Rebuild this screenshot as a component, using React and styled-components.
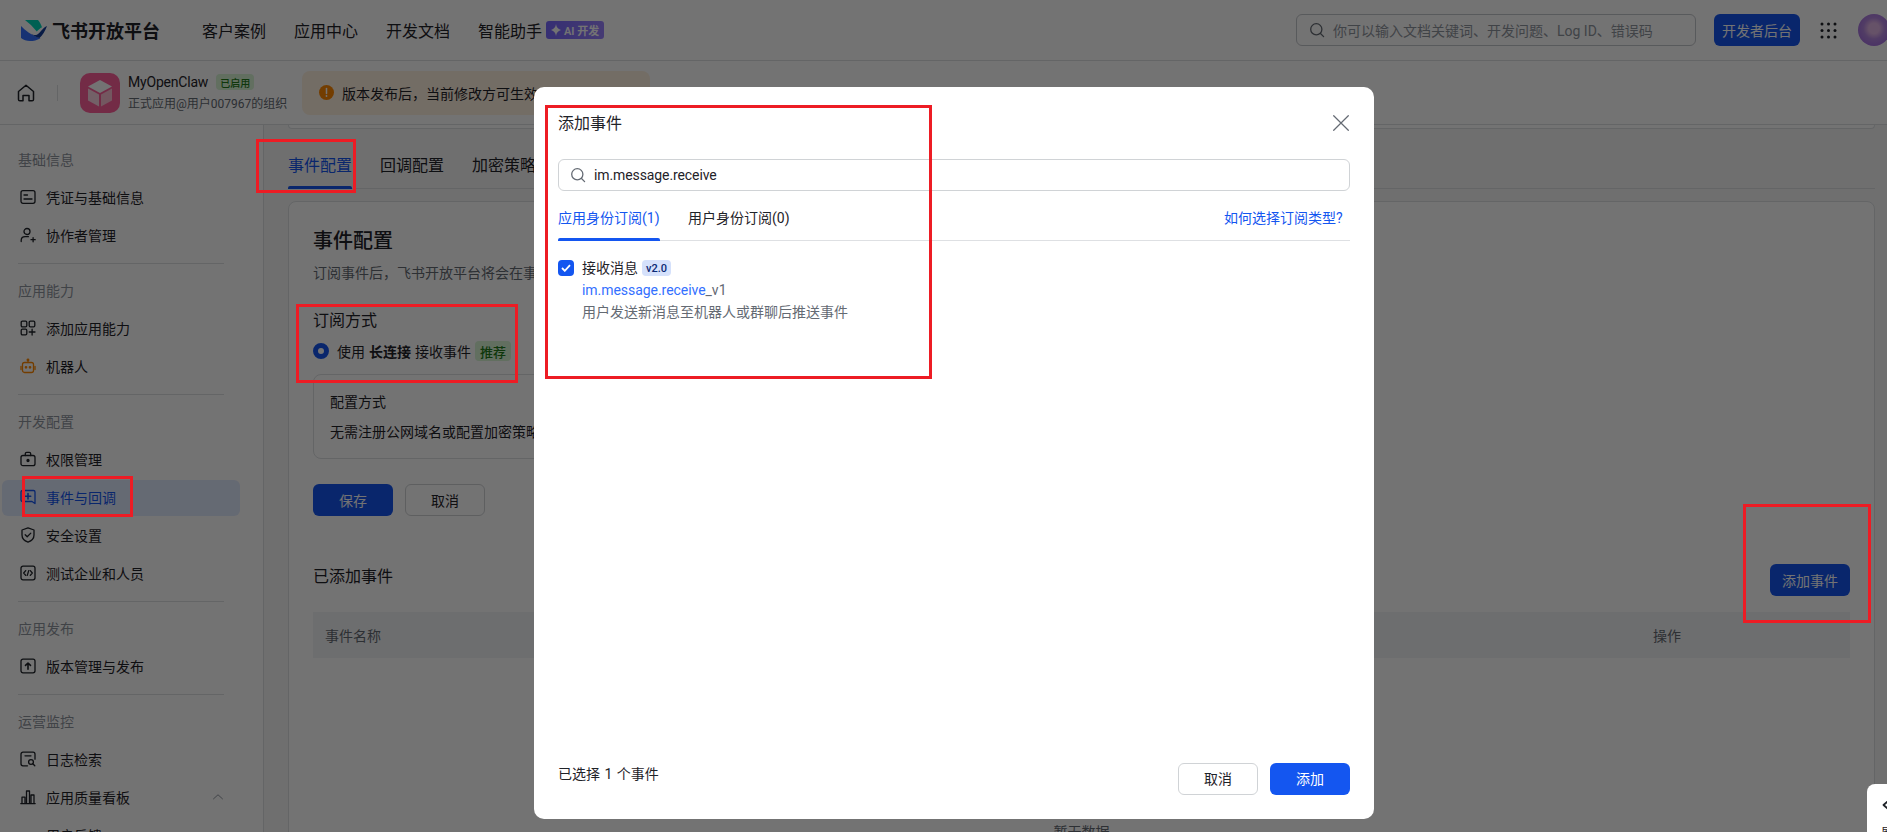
import styled, { createGlobalStyle } from 'styled-components';

const GlobalStyle = createGlobalStyle`
    html, body {
        margin: 0;
        padding: 0;
        width: 100%;
        height: 100%;
        overflow: hidden;
        background: #fff;
    }
    * {
        box-sizing: border-box;
    }
    body {
        font-family: Roboto, "Noto Sans CJK SC", sans-serif;
        font-size: 14px;
        color: #1f2329;
    }
`;

const colors = {
    primary: '#1456f0',
    text: '#1f2329',
    secondary: '#646a73',
    muted: '#8f959e',
    line: '#dee0e3',
};

const Page = styled.div`
    position: relative;
    width: 1887px;
    height: 832px;
    overflow: hidden;
    display: flex;
    flex-direction: column;
`;

const Header = styled.header`
    height: 61px;
    flex-shrink: 0;
    display: flex;
    align-items: center;
    padding-left: 21px;
    border-bottom: 1px solid ${colors.line};
`;

const Brand = styled.div`
    display: flex;
    align-items: center;
    gap: 5px;
    font-size: 18px;
    font-weight: 600;
    white-space: nowrap;
`;

const Nav = styled.nav`
    display: flex;
    align-items: center;
    gap: 28px;
    margin-left: 42px;
    font-size: 16px;
`;

const NavItem = styled.span`
    display: flex;
    align-items: center;
    gap: 4px;
    white-space: nowrap;
`;

const AiBadge = styled.span`
    display: flex;
    align-items: center;
    justify-content: center;
    gap: 3px;
    width: 58px;
    height: 18px;
    border-radius: 3px;
    background: linear-gradient(90deg, #7868ff, #9a82ff);
    color: #fff;
    font-size: 11px;
    font-weight: 600;
`;

const SearchBox = styled.div`
    margin-left: auto;
    width: 400px;
    height: 32px;
    display: flex;
    align-items: center;
    gap: 8px;
    padding-left: 12px;
    border: 1px solid #c4c7cc;
    border-radius: 6px;
    color: ${colors.muted};
    white-space: nowrap;
    & svg {
        color: ${colors.secondary};
    }
`;

const PrimaryButton = styled.button`
    width: ${(props) => props.$width || 80}px;
    height: 32px;
    padding: 0;
    border: none;
    border-radius: 6px;
    background: ${colors.primary};
    color: #fff;
    font: inherit;
    white-space: nowrap;
    flex-shrink: 0;
`;

const GhostButton = styled.button`
    width: 80px;
    height: 32px;
    padding: 0;
    border: 1px solid #d0d3d6;
    border-radius: 6px;
    background: #fff;
    color: ${colors.text};
    font: inherit;
`;

const DevButton = styled(PrimaryButton)`
    margin-left: 18px;
`;

const AppsIcon = styled.span`
    display: flex;
    margin-left: 20px;
`;

const Avatar = styled.span`
    width: 32px;
    height: 32px;
    margin-left: 21px;
    margin-right: -3px;
    flex-shrink: 0;
    border-radius: 50%;
    background: radial-gradient(circle at 50% 45%, #e3b6e6 0 22%, #b486e0 45%, #9a5ee0 100%);
`;

const SubHeader = styled.div`
    height: 64px;
    flex-shrink: 0;
    display: flex;
    align-items: center;
    padding-left: 17px;
    border-bottom: 1px solid ${colors.line};
`;

const SubDivider = styled.span`
    width: 1px;
    height: 16px;
    margin: 0 22px;
    background: ${colors.line};
`;

const AppLogo = styled.div`
    width: 40px;
    height: 40px;
    flex-shrink: 0;
    display: flex;
    align-items: center;
    justify-content: center;
    border-radius: 10px;
    background: #ff5f9c;
`;

const AppInfo = styled.div`
    width: 174px;
    margin-left: 8px;
    white-space: nowrap;
`;

const AppName = styled.div`
    display: flex;
    align-items: center;
    gap: 8px;
    height: 20px;
    font-size: 14px;
    letter-spacing: -0.2px;
`;

const GreenTag = styled.span`
    height: ${(props) => props.$height}px;
    padding: 0 ${(props) => props.$pad}px;
    display: inline-flex;
    align-items: center;
    border-radius: 4px;
    background: #d9f5d6;
    color: #237b19;
    font-size: ${(props) => props.$size}px;
    font-weight: 500;
    letter-spacing: 0;
`;

const AppOrg = styled.div`
    margin-top: 3px;
    font-size: 12px;
    line-height: 18px;
    color: ${colors.secondary};
`;

const Notice = styled.div`
    width: 348px;
    height: 44px;
    display: flex;
    align-items: center;
    gap: 8px;
    padding-left: 17px;
    border-radius: 8px;
    background: #fff1e0;
    white-space: nowrap;
`;

const Body = styled.div`
    flex: 1;
    min-height: 0;
    display: flex;
`;

const Sidebar = styled.aside`
    width: 264px;
    flex-shrink: 0;
    padding: 17px 23px 0 2px;
    border-right: 1px solid ${colors.line};
    overflow: hidden;
`;

const SectionLabel = styled.div`
    height: 36px;
    margin-left: 16px;
    line-height: 36px;
    color: ${colors.muted};
`;

const SideItem = styled.div`
    height: 36px;
    margin-top: 2px;
    display: flex;
    align-items: center;
    gap: 10px;
    padding: 0 16px 2px 18px;
    border-radius: 6px;
    background: ${(props) => (props.$active ? '#e1eaff' : 'transparent')};
    color: ${(props) => (props.$active ? colors.primary : colors.text)};
    white-space: nowrap;
`;

const IconSlot = styled.span`
    width: 16px;
    height: 16px;
    flex-shrink: 0;
    display: flex;
    color: ${(props) => props.$color || 'inherit'};
`;

const Chevron = styled.span`
    margin-left: auto;
    display: flex;
    color: ${colors.muted};
`;

const SideDivider = styled.div`
    height: 1px;
    margin: 9px 16px 9px 16px;
    background: ${colors.line};
`;

const Main = styled.main`
    flex: 1;
    min-width: 0;
    padding: 0 12px 0 24px;
    background: #f5f6f7;
`;

const CardEnd = styled.div`
    height: 4px;
    background: #fff;
    border: 1px solid ${colors.line};
    border-top: none;
    border-radius: 0 0 8px 8px;
`;

const MainTabs = styled.div`
    height: 57px;
    margin-top: 3px;
    padding-top: 12px;
    display: flex;
    gap: 28px;
    border-bottom: 1px solid ${colors.line};
`;

const MainTab = styled.span`
    position: relative;
    height: 45px;
    line-height: 43px;
    font-size: 16px;
    color: ${(props) => (props.$active ? colors.primary : colors.text)};
    &::after {
        content: '';
        display: ${(props) => (props.$active ? 'block' : 'none')};
        position: absolute;
        left: 0;
        right: 0;
        bottom: 0;
        height: 3px;
        border-radius: 2px 2px 0 0;
        background: ${colors.primary};
    }
`;

const Card = styled.section`
    height: 800px;
    margin-top: 12px;
    padding: 25px 24px 0;
    background: #fff;
    border: 1px solid ${colors.line};
    border-radius: 8px;
`;

const CardTitle = styled.h2`
    margin: 0;
    font-size: 20px;
    font-weight: 500;
    line-height: 28px;
`;

const CardDesc = styled.p`
    margin: 7px 0 0;
    line-height: 22px;
    color: ${colors.secondary};
`;

const SubTitle = styled.h3`
    margin: ${(props) => props.$top}px 0 0;
    font-size: 16px;
    font-weight: 400;
    line-height: 24px;
`;

const RadioRow = styled.label`
    margin-top: 7px;
    height: 22px;
    display: flex;
    align-items: center;
    gap: 8px;
    & b {
        font-weight: 600;
    }
`;

const RadioDot = styled.span`
    width: 16px;
    height: 16px;
    border-radius: 50%;
    border: 5px solid ${colors.primary};
    background: #fff;
`;

const RadioText = styled.span`
    margin-right: -4px;
    white-space: pre;
    word-spacing: 0.5px;
`;

const ConfigBox = styled.div`
    width: 800px;
    height: 85px;
    margin-top: 12px;
    padding: 16px;
    border: 1px solid ${colors.line};
    border-radius: 8px;
    & p {
        margin: 8px 0 0;
        line-height: 22px;
    }
`;

const ConfigHead = styled.div`
    line-height: 22px;
`;

const ActionRow = styled.div`
    margin-top: 25px;
    display: flex;
    gap: 12px;
`;

const EventsHead = styled.div`
    margin-top: 48px;
    display: flex;
    justify-content: space-between;
    align-items: flex-start;
    & h3 {
        line-height: 26px;
    }
`;

const TableHead = styled.div`
    height: 46px;
    margin-top: 16px;
    padding-left: 12px;
    display: flex;
    align-items: center;
    background: #f2f3f5;
    color: ${colors.secondary};
`;

const ActionCol = styled.span`
    margin-left: auto;
    width: 197px;
`;

const Empty = styled.div`
    margin-top: 163px;
    text-align: center;
    line-height: 22px;
    color: ${colors.secondary};
`;

const Overlay = styled.div`
    position: absolute;
    inset: 0;
    background: rgba(0, 0, 0, 0.55);
`;

const Modal = styled.div`
    position: absolute;
    left: 534px;
    top: 87px;
    width: 840px;
    height: 732px;
    padding: 24px;
    display: flex;
    flex-direction: column;
    border-radius: 10px;
    background: #fff;
`;

const ModalHead = styled.div`
    height: 24px;
    display: flex;
    justify-content: space-between;
    align-items: center;
    font-size: 16px;
    color: ${colors.secondary};
    & span {
        margin-top: -2px;
        color: ${colors.text};
    }
`;

const ModalSearch = styled.div`
    height: 32px;
    margin-top: 24px;
    display: flex;
    align-items: center;
    gap: 8px;
    padding: 0 0 1px 11px;
    border: 1px solid #d0d3d6;
    border-radius: 6px;
    letter-spacing: -0.1px;
    & svg {
        color: ${colors.secondary};
    }
`;

const ModalTabs = styled.div`
    height: 43px;
    margin-top: 7px;
    display: flex;
    gap: 28px;
    border-bottom: 1px solid ${colors.line};
`;

const ModalTab = styled.span`
    position: relative;
    min-width: 102px;
    height: 43px;
    line-height: 40px;
    color: ${(props) => (props.$active ? colors.primary : colors.text)};
    &::after {
        content: '';
        display: ${(props) => (props.$active ? 'block' : 'none')};
        position: absolute;
        left: 0;
        right: 0;
        bottom: 0;
        height: 3px;
        border-radius: 2px 2px 0 0;
        background: ${colors.primary};
    }
`;

const HelpLink = styled.a`
    min-width: 120px;
    margin-left: auto;
    margin-right: 6px;
    line-height: 40px;
    color: ${colors.primary};
`;

const EventRow = styled.div`
    margin-top: 16px;
    display: flex;
    gap: 8px;
`;

const CheckBox = styled.span`
    width: 16px;
    height: 16px;
    margin-top: 3px;
    display: flex;
    align-items: center;
    justify-content: center;
    border-radius: 4px;
    background: ${colors.primary};
`;

const EventLine = styled.div`
    height: 22px;
    padding-bottom: ${(props) => (props.$flat ? 0 : 2)}px;
    display: flex;
    align-items: center;
    gap: 4px;
    color: ${(props) => props.$color || colors.text};
`;

const VersionTag = styled.span`
    height: 16px;
    margin-top: 2px;
    padding: 0 4px;
    display: flex;
    align-items: center;
    border-radius: 4px;
    background: #d5e1fb;
    color: #0c2a75;
    font-size: 11px;
    font-weight: 500;
`;

const EventKey = styled.span`
    color: #3370ff;
    letter-spacing: -0.05px;
`;

const EventSuffix = styled.span`
    margin-left: -4px;
    color: ${colors.secondary};
`;

const ModalFoot = styled.div`
    margin-top: auto;
    display: flex;
    align-items: flex-start;
    gap: 12px;
    line-height: 22px;
`;

const Selected = styled.span`
    margin-right: auto;
    word-spacing: 1px;
`;

const Annotation = styled.div`
    position: absolute;
    left: ${(props) => props.$x}px;
    top: ${(props) => props.$y}px;
    width: ${(props) => props.$w}px;
    height: ${(props) => props.$h}px;
    border: 3px solid #ed1c24;
`;

const SideDock = styled.div`
    position: absolute;
    left: 1867px;
    top: 784px;
    width: 40px;
    height: 60px;
    padding: 13px 0 0 14px;
    border-radius: 8px 0 0 0;
    background: #fff;
    font-size: 12px;
    line-height: 14px;
`;

const DockText = styled.div`
    margin-top: 10px;
    width: 14px;
`;

function Icon({ children, size = 16, width = 1.3 }) {
    return (
        <svg
            width={size}
            height={size}
            viewBox="0 0 16 16"
            fill="none"
            stroke="currentColor"
            strokeWidth={width}
            strokeLinecap="round"
            strokeLinejoin="round"
        >
            {children}
        </svg>
    );
}

const icons = {
    card: (
        <Icon>
            <rect x="1" y="1.7" width="14" height="12.6" rx="2" />
            <path d="M4 6h3.5M4 10h8" />
        </Icon>
    ),
    user: (
        <Icon>
            <circle cx="7" cy="4.5" r="3" />
            <path d="M1.2 14.5v-1.2c0-2.2 1.8-3.6 4-3.6h3.2M11 12.7h4.2M13.1 10.6v4.2" />
        </Icon>
    ),
    apps: (
        <Icon>
            <rect x="1.2" y="1.2" width="5.6" height="5.6" rx="1.2" />
            <rect x="9.2" y="1.2" width="5.6" height="5.6" rx="1.2" />
            <rect x="1.2" y="9.2" width="5.6" height="5.6" rx="1.2" />
            <path d="M9.2 12h5.8M12.1 9.2V15" />
        </Icon>
    ),
    robot: (
        <Icon>
            <rect x="2.5" y="4.5" width="11" height="10" rx="2" />
            <path d="M8 4.5V2.6M1 8.3v3.2M15 8.3v3.2" />
            <circle cx="8" cy="1.9" r="0.8" fill="currentColor" />
            <circle cx="6" cy="9.3" r="0.7" fill="currentColor" />
            <circle cx="10" cy="9.3" r="0.7" fill="currentColor" />
        </Icon>
    ),
    lock: (
        <Icon>
            <rect x="1" y="4.5" width="14" height="10.2" rx="2" />
            <path d="M5.3 4.5V2.8c0-.8.6-1.4 1.4-1.4h2.6c.8 0 1.4.6 1.4 1.4v1.7" />
            <circle cx="8" cy="9.5" r="1" fill="currentColor" />
        </Icon>
    ),
    event: (
        <Icon>
            <path d="M2.5 1.5h11c.8 0 1.5.7 1.5 1.5v11.5l-3-2H2.5c-.8 0-1.5-.7-1.5-1.5V3c0-.8.7-1.5 1.5-1.5z" />
            <path d="M8 4.5v5.4M5.3 7.2h5.4" strokeWidth="1.6" />
        </Icon>
    ),
    shield: (
        <Icon>
            <path d="M8 .9l6 2.1v5c0 3.4-2.5 5.9-6 7.1-3.5-1.2-6-3.7-6-7.1V3z" />
            <path d="M5.2 7.7l2 2 3.6-3.6" />
        </Icon>
    ),
    code: (
        <Icon>
            <rect x="1" y="1.2" width="14" height="13.6" rx="2" />
            <path d="M5.7 5.6L3.7 8l2 2.4M10.3 5.6l2 2.4-2 2.4M8.7 5.6l-1.4 4.8" />
        </Icon>
    ),
    upload: (
        <Icon>
            <rect x="1" y="1.2" width="14" height="13.6" rx="2" />
            <path d="M8 11.3V5M5.5 7.4L8 5l2.5 2.4" strokeWidth="1.6" />
        </Icon>
    ),
    log: (
        <Icon>
            <path d="M7.5 14.8H3c-1.1 0-2-.9-2-2V3.2c0-1.1.9-2 2-2h10c1.1 0 2 .9 2 2v5" />
            <path d="M5 4.8h6" />
            <circle cx="11" cy="11" r="2.4" />
            <path d="M12.8 12.8l2 2" />
        </Icon>
    ),
    chart: (
        <Icon>
            <path d="M.8 14.6h14.4M2 14.6V8.2h3v6.4M6.5 14.6V2h3v12.6M11 14.6V6h3v8.6" />
        </Icon>
    ),
};

const sections = [
    {
        label: '基础信息',
        items: [
            { name: '凭证与基础信息', icon: 'card' },
            { name: '协作者管理', icon: 'user' },
        ],
    },
    {
        label: '应用能力',
        items: [
            { name: '添加应用能力', icon: 'apps' },
            { name: '机器人', icon: 'robot', color: '#ff8800' },
        ],
    },
    {
        label: '开发配置',
        items: [
            { name: '权限管理', icon: 'lock' },
            { name: '事件与回调', icon: 'event', active: true },
            { name: '安全设置', icon: 'shield' },
            { name: '测试企业和人员', icon: 'code' },
        ],
    },
    {
        label: '应用发布',
        items: [{ name: '版本管理与发布', icon: 'upload' }],
    },
    {
        label: '运营监控',
        items: [
            { name: '日志检索', icon: 'log' },
            { name: '应用质量看板', icon: 'chart', open: true },
            { name: '用户反馈' },
        ],
    },
];

function SearchIcon() {
    return (
        <Icon>
            <circle cx="7.3" cy="7.3" r="5.6" />
            <path d="M11.5 11.5L14.6 14.6" />
        </Icon>
    );
}

function FeishuLogo() {
    return (
        <svg width="26" height="21" viewBox="0 0 26 21">
            <path d="M4 0h13c1.6 1.8 3 4.4 4 7.2-1.900 1-3.700 2.600-5.200 4.300C12 6.800 8 3 4 0z" fill="#00d6b9" />
            <path d="M0 6c4 4.200 9.600 8.900 19.500 12.200C16 20.200 12.500 21 9 21c-3.400 0-6.600-1-9-3z" fill="#3370ff" />
            <path d="M9.500 13.200c2 1.600 4.500 2.600 6.800 1.300 3-1.800 5.500-6.900 9.700-8.500-2 5-4.500 9.500-7.500 12-3.500-1-6.500-2.800-9-4.800z" fill="#133c9a" />
        </svg>
    );
}

function CubeLogo() {
    return (
        <svg width="26" height="28" viewBox="0 0 26 28">
            <path d="M13 1l12 6.500-12 6.500L1 7.500z" fill="#fff" />
            <path d="M1 9.500l11 6v12l-11-6z" fill="#ffd5e4" />
            <path d="M25 9.500l-11 6v12l11-6z" fill="#ffc0d6" />
        </svg>
    );
}

function HomeIcon() {
    return (
        <svg width="18" height="18" viewBox="0 0 18 18" fill="none" stroke="currentColor" strokeWidth="1.5" strokeLinejoin="round">
            <path d="M1.500 7.500L9 1.200l7.500 6.300v8c0 .8-.6 1.300-1.300 1.300H12v-5.300H6v5.300H2.800c-.7 0-1.300-.5-1.300-1.300z" />
        </svg>
    );
}

function GridDots() {
    const dots = [2, 8.500, 15];
    return (
        <svg width="17" height="17" viewBox="0 0 17 17" fill="#1f2329">
            {dots.map((y) =>
                dots.map((x) => <circle key={`${x}-${y}`} cx={x} cy={y} r="1.500" />),
            )}
        </svg>
    );
}

function AiStar() {
    return (
        <svg width="10" height="12" viewBox="0 0 10 12" fill="#fff">
            <path d="M5 0c.5 3.200 1.800 5 5 6-3.200 1-4.500 2.800-5 6-.5-3.200-1.800-5-5-6 3.200-1 4.500-2.800 5-6z" />
        </svg>
    );
}

function App() {
    return (
        <Page>
            <GlobalStyle />
            <Header>
                <Brand>
                    <FeishuLogo />
                    飞书开放平台
                </Brand>
                <Nav>
                    <NavItem>客户案例</NavItem>
                    <NavItem>应用中心</NavItem>
                    <NavItem>开发文档</NavItem>
                    <NavItem>
                        智能助手
                        <AiBadge>
                            <AiStar />
                            AI 开发
                        </AiBadge>
                    </NavItem>
                </Nav>
                <SearchBox>
                    <SearchIcon />
                    你可以输入文档关键词、开发问题、Log ID、错误码
                </SearchBox>
                <DevButton $width={86}>开发者后台</DevButton>
                <AppsIcon>
                    <GridDots />
                </AppsIcon>
                <Avatar />
            </Header>
            <SubHeader>
                <HomeIcon />
                <SubDivider />
                <AppLogo>
                    <CubeLogo />
                </AppLogo>
                <AppInfo>
                    <AppName>
                        MyOpenClaw
                        <GreenTag $height={16} $pad={4} $size={10}>已启用</GreenTag>
                    </AppName>
                    <AppOrg>正式应用@用户007967的组织</AppOrg>
                </AppInfo>
                <Notice>
                    <svg width="15" height="15" viewBox="0 0 15 15">
                        <circle cx="7.500" cy="7.500" r="7.500" fill="#ff8800" />
                        <path d="M7.500 3.500v5" stroke="#fff" strokeWidth="1.500" strokeLinecap="round" />
                        <circle cx="7.500" cy="11" r="0.900" fill="#fff" />
                    </svg>
                    版本发布后，当前修改方可生效
                </Notice>
            </SubHeader>
            <Body>
                <Sidebar>
                    {sections.map((section, index) => (
                        <div key={section.label}>
                            {index > 0 && <SideDivider />}
                            <SectionLabel>{section.label}</SectionLabel>
                            {section.items.map((item) => (
                                <SideItem key={item.name} $active={item.active}>
                                    <IconSlot $color={item.color}>{icons[item.icon]}</IconSlot>
                                    {item.name}
                                    {item.open && (
                                        <Chevron>
                                            <Icon size={12}>
                                                <path d="M2 10.500L8 5l6 5.500" />
                                            </Icon>
                                        </Chevron>
                                    )}
                                </SideItem>
                            ))}
                        </div>
                    ))}
                </Sidebar>
                <Main>
                    <CardEnd />
                    <MainTabs>
                        <MainTab $active>事件配置</MainTab>
                        <MainTab>回调配置</MainTab>
                        <MainTab>加密策略</MainTab>
                    </MainTabs>
                    <Card>
                        <CardTitle>事件配置</CardTitle>
                        <CardDesc>订阅事件后，飞书开放平台将会在事件发生时推送给应用</CardDesc>
                        <SubTitle $top={25}>订阅方式</SubTitle>
                        <RadioRow>
                            <RadioDot />
                            <RadioText>
                                使用 <b>长连接</b> 接收事件
                            </RadioText>
                            <GreenTag $height={20} $pad={5} $size={13}>推荐</GreenTag>
                        </RadioRow>
                        <ConfigBox>
                            <ConfigHead>配置方式</ConfigHead>
                            <p>无需注册公网域名或配置加密策略，即可接收事件推送</p>
                        </ConfigBox>
                        <ActionRow>
                            <PrimaryButton>保存</PrimaryButton>
                            <GhostButton>取消</GhostButton>
                        </ActionRow>
                        <EventsHead>
                            <SubTitle $top={0}>已添加事件</SubTitle>
                            <PrimaryButton>添加事件</PrimaryButton>
                        </EventsHead>
                        <TableHead>
                            事件名称
                            <ActionCol>操作</ActionCol>
                        </TableHead>
                        <Empty>暂无数据</Empty>
                    </Card>
                </Main>
            </Body>
            <Overlay />
            <Modal>
                <ModalHead>
                    <span>添加事件</span>
                    <Icon size={18} width={1.1}>
                        <path d="M1.500 1.500l13 13M14.500 1.500l-13 13" />
                    </Icon>
                </ModalHead>
                <ModalSearch>
                    <SearchIcon />
                    im.message.receive
                </ModalSearch>
                <ModalTabs>
                    <ModalTab $active>应用身份订阅(1)</ModalTab>
                    <ModalTab>用户身份订阅(0)</ModalTab>
                    <HelpLink>如何选择订阅类型?</HelpLink>
                </ModalTabs>
                <EventRow>
                    <CheckBox>
                        <svg width="10" height="8" viewBox="0 0 10 8" fill="none">
                            <path d="M1 4l2.800 2.800L9 1.200" stroke="#fff" strokeWidth="1.800" />
                        </svg>
                    </CheckBox>
                    <div>
                        <EventLine>
                            接收消息
                            <VersionTag>v2.0</VersionTag>
                        </EventLine>
                        <EventLine $flat>
                            <EventKey>im.message.receive</EventKey>
                            <EventSuffix>_v1</EventSuffix>
                        </EventLine>
                        <EventLine $color={colors.secondary}>用户发送新消息至机器人或群聊后推送事件</EventLine>
                    </div>
                </EventRow>
                <ModalFoot>
                    <Selected>已选择 1 个事件</Selected>
                    <GhostButton>取消</GhostButton>
                    <PrimaryButton>添加</PrimaryButton>
                </ModalFoot>
            </Modal>
            <SideDock>
                <Icon size={16} width={1.8}>
                    <path d="M10 1.500L2.500 8l7.500 6.500" />
                </Icon>
                <DockText>展开</DockText>
            </SideDock>
            <Annotation $x={256} $y={139} $w={100} $h={54} />
            <Annotation $x={296} $y={304} $w={222} $h={79} />
            <Annotation $x={22} $y={476} $w={111} $h={41} />
            <Annotation $x={545} $y={105} $w={387} $h={274} />
            <Annotation $x={1743} $y={504} $w={128} $h={119} />
        </Page>
    );
}

export default App;
